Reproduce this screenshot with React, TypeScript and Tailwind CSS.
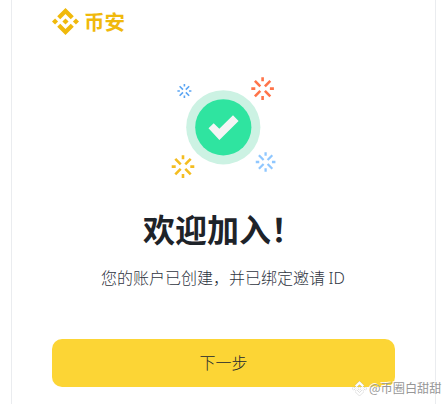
type BurstProps = {
  x: number;
  y: number;
  scale: number;
  color: string;
};

function Burst({ x, y, scale, color }: BurstProps) {
  return (
    <g transform={`translate(${x} ${y}) scale(${scale})`} stroke={color} strokeWidth={2.6}>
      <path d="M0-11.3V-7.3M0 7.3v4M-11.3 0h4M7.3 0h4" />
      <path d="M-7.7-7.7l5.4 5.4M7.7-7.7l-5.4 5.4M-7.7 7.7l5.4-5.4M7.7 7.7l-5.4-5.4" />
    </g>
  );
}

function BinanceMark({ className }: { className?: string }) {
  return (
    <svg viewBox="0 0 126.61 126.61" className={className} fill="currentColor" aria-hidden="true">
      <path d="M38.73 53.2l24.59-24.58 24.6 24.6 14.3-14.31L63.32 0 24.42 38.9z" />
      <path d="M0 63.31L14.3 49l14.31 14.31-14.31 14.3z" />
      <path d="M38.73 73.41L63.32 98l24.6-24.6 14.31 14.29-38.9 38.91-38.91-38.88z" />
      <path d="M98 63.31L112.3 49l14.31 14.3-14.31 14.32z" />
      <path d="M77.83 63.3L63.32 48.78 48.79 63.3l14.53 14.51z" />
    </svg>
  );
}

function SuccessIllustration() {
  return (
    <svg width="124" height="120" viewBox="160 65 124 120" className="mt-6 mr-[3px]" fill="none" aria-hidden="true">
      <circle cx="223.3" cy="127.3" r="37.1" fill="#ccf2e3" />
      <circle cx="223.3" cy="127.3" r="28.1" fill="#2fe4a0" />
      <path d="M208.5 128.3l5.2-5.1 5.6 5.6L233 115.2l5.6 5.7-19.2 19.2z" fill="#f5f5f5" />
      <Burst x={184.4} y={91} scale={0.62} color="#5ba5f3" />
      <Burst x={262.6} y={88.6} scale={1} color="#ff7449" />
      <Burst x={183} y={166.6} scale={1} color="#f4bd20" />
      <Burst x={265.6} y={162} scale={0.87} color="#8fc7ff" />
    </svg>
  );
}

export default function App() {
  return (
    <div className="relative h-[404px] w-[448px] overflow-hidden bg-white font-['Noto_Sans_CJK_SC',sans-serif]">
      <main className="ml-[11px] flex h-full w-[425px] flex-col border-x border-[#eaecef] pr-10 pl-10">
        <header className="flex h-[41px] items-center gap-[5px] pt-0.5 text-[#f0b90b]">
          <BinanceMark className="size-[27px]" />
          <span className="-mt-px text-[20.5px] leading-7 font-bold">币安</span>
        </header>

        <section className="flex flex-col items-center text-center">
          <SuccessIllustration />
          <h1 className="mt-[23px] mr-px text-[32px] leading-10 font-bold whitespace-nowrap text-[#1e2329]">
            欢迎加入{"\uff01"}
          </h1>
          <p className="mt-[17px] mr-px text-base leading-6 font-light whitespace-nowrap text-[#2f353f]">
            您的账户已创建{"\uff0c"}并已绑定邀请 <span className="font-['Noto_Sans',sans-serif]">ID</span>
          </p>
        </section>

        <button
          type="button"
          className="mt-[49px] h-12 w-[343px] shrink-0 rounded-[10px] bg-[#fcd535] pb-0.5 text-base font-light text-[#202630]"
        >
          下一步
        </button>
      </main>

      <div className="absolute top-[379px] left-[352px] flex items-center gap-[2px]">
        <BinanceMark className="size-[15px] text-white [filter:drop-shadow(0.7px_0.7px_0.3px_#777)]" />
        <span className="text-[12.2px] leading-[18px] whitespace-nowrap text-[#979797] [text-shadow:-0.7px_-0.7px_0_#fff]">
          @币圈白甜甜
        </span>
      </div>
    </div>
  );
}
